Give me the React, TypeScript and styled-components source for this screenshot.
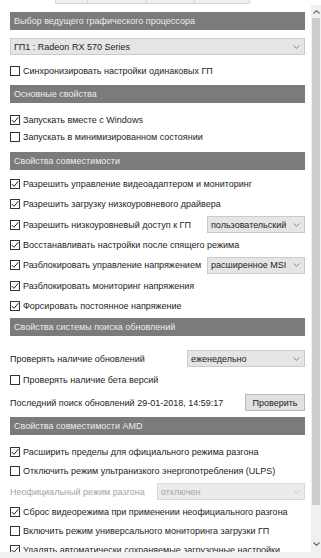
import React from "react";
import styled, { createGlobalStyle } from "styled-components";

const Global = createGlobalStyle`
  html, body { margin: 0; padding: 0; background: #ffffff; }
  body {
    font-family: "Liberation Sans", Arial, sans-serif;
    font-size: 9px;
    color: #1c1c1c;
  }
  * { box-sizing: border-box; }
`;

const Window = styled.div`
  width: 321px;
  height: 558px;
  display: flex;
  flex-direction: column;
  overflow: hidden;
  background: #ffffff;
`;

const TabStrip = styled.div`
  height: 4px;
  display: flex;
  padding-left: 55px;
`;

const Tab = styled.div<{ $w: number; $first?: boolean }>`
  width: ${(p) => p.$w}px;
  height: 4px;
  background: #f0f0f0;
  border-right: 1px solid #d6d6d6;
  border-bottom: 1px solid #d6d6d6;
  border-left: ${(p) => (p.$first ? "1px solid #d6d6d6" : "none")};
`;

const Body = styled.div`
  display: flex;
  height: 548px;
`;

const Content = styled.div`
  flex: 1;
  padding: 8px 6px 0 10px;
  overflow: hidden;
  display: flex;
  flex-direction: column;
`;

const Header = styled.div`
  height: 18px;
  flex: none;
  background: #7b7b7b;
  color: #ececec;
  padding-left: 4px;
  display: flex;
  align-items: center;
`;

const Group = styled.div<{ $pt: number; $pb: number }>`
  flex: none;
  display: flex;
  flex-direction: column;
  padding: ${(p) => p.$pt}px 0 ${(p) => p.$pb}px;
`;

const Row = styled.div<{ $h: number; $mt?: number }>`
  height: ${(p) => p.$h}px;
  margin-top: ${(p) => p.$mt ?? 0}px;
  flex: none;
  display: flex;
  align-items: center;
  justify-content: space-between;
  white-space: nowrap;
`;

const CheckWrap = styled.label`
  display: flex;
  align-items: center;
  gap: 3px;
`;

const Box = styled.span`
  width: 10px;
  height: 10px;
  border: 1px solid #333333;
  background: #ffffff;
  display: flex;
  align-items: center;
  justify-content: center;
  flex: none;
`;

const Label = styled.span<{ $disabled?: boolean }>`
  color: ${(p) => (p.$disabled ? "#a3a3a3" : "#1c1c1c")};
`;

const SelectBox = styled.div<{ $w?: number; $disabled?: boolean }>`
  width: ${(p) => (p.$w ? `${p.$w}px` : "100%")};
  height: 17px;
  flex: none;
  background: ${(p) => (p.$disabled ? "#ebebeb" : "#e5e5e5")};
  border: 1px solid ${(p) => (p.$disabled ? "#d9d9d9" : "#cbcbcb")};
  color: ${(p) => (p.$disabled ? "#a6a6a6" : "#1c1c1c")};
  display: flex;
  align-items: center;
  justify-content: space-between;
  padding: 0 4px 0 3px;
`;

const Button = styled.div`
  width: 60px;
  height: 17px;
  background: #e1e1e1;
  border: 1px solid #b9b9b9;
  display: flex;
  align-items: center;
  justify-content: center;
  flex: none;
`;

const Scroll = styled.div`
  width: 10px;
  margin-top: 1px;
  background: #f0f0f0;
  display: flex;
  flex-direction: column;
  align-items: center;
`;

const ArrowBtn = styled.div<{ $h: number }>`
  height: ${(p) => p.$h}px;
  width: 10px;
  display: flex;
  align-items: center;
  justify-content: center;
  flex: none;
`;

const Thumb = styled.div`
  width: 8px;
  height: 487px;
  background: #cdcdcd;
  flex: none;
`;

const Spacer = styled.div`
  flex: 1;
`;

const BottomStrip = styled.div`
  height: 6px;
  background: #f0f0f0;
  flex: none;
`;

const Chevron = ({ color = "#7a7a7a" }: { color?: string }) => (
  <svg width="7" height="4" viewBox="0 0 7 4">
    <polyline points="0.5,0.5 3.5,3.3 6.5,0.5" fill="none" stroke={color} strokeWidth="0.9" />
  </svg>
);

const ScrollArrow = ({ up }: { up?: boolean }) => (
  <svg width="7" height="4" viewBox="0 0 7 4">
    <polyline
      points={up ? "0.5,3.5 3.5,0.7 6.5,3.5" : "0.5,0.5 3.5,3.3 6.5,0.5"}
      fill="none"
      stroke="#606060"
      strokeWidth="1.1"
    />
  </svg>
);

const Check = ({ checked, text, disabled }: { checked?: boolean; text: string; disabled?: boolean }) => (
  <CheckWrap>
    <Box>
      {checked && (
        <svg width="8" height="8" viewBox="0 0 8 8">
          <polyline points="0.8,4 3,6.3 7.3,1.2" fill="none" stroke="#222" strokeWidth="1" />
        </svg>
      )}
    </Box>
    <Label $disabled={disabled}>{text}</Label>
  </CheckWrap>
);

const Select = ({ text, w, disabled }: { text: string; w?: number; disabled?: boolean }) => (
  <SelectBox $w={w} $disabled={disabled}>
    <span>{text}</span>
    <Chevron color={disabled ? "#c4c4c4" : "#7a7a7a"} />
  </SelectBox>
);

const compat: { t: string; c: boolean; sel?: string }[] = [
  { t: "Разрешить управление видеоадаптером и мониторинг", c: true },
  { t: "Разрешить загрузку низкоуровневого драйвера", c: true },
  { t: "Разрешить низкоуровневый доступ к ГП", c: true, sel: "пользовательский" },
  { t: "Восстанавливать настройки после спящего режима", c: true },
  { t: "Разблокировать управление напряжением", c: true, sel: "расширенное MSI" },
  { t: "Разблокировать мониторинг напряжения", c: true },
  { t: "Форсировать постоянное напряжение", c: true },
];

export default function App() {
  return (
    <>
      <Global />
      <Window>
        <TabStrip>
          <Tab $w={33} $first />
          <Tab $w={59} />
          <Tab $w={48} />
          <Tab $w={55} />
        </TabStrip>
        <Body>
          <Content>
            <Header>Выбор ведущего графического процессора</Header>
            <Group $pt={8} $pb={5}>
              <Select text="ГП1 : Radeon RX 570 Series" />
              <Row $h={18} $mt={7}>
                <Check text="Синхронизировать настройки одинаковых ГП" />
              </Row>
            </Group>

            <Header>Основные свойства</Header>
            <Group $pt={8} $pb={7}>
              <Row $h={17}>
                <Check checked text="Запускать вместе с Windows" />
              </Row>
              <Row $h={17}>
                <Check text="Запускать в минимизированном состоянии" />
              </Row>
            </Group>

            <Header>Свойства совместимости</Header>
            <Group $pt={4} $pb={2}>
              {compat.map((r) => (
                <Row key={r.t} $h={20.3}>
                  <Check checked={r.c} text={r.t} />
                  {r.sel && <Select text={r.sel} w={98} />}
                </Row>
              ))}
            </Group>

            <Header>Свойства системы поиска обновлений</Header>
            <Group $pt={13} $pb={4}>
              <Row $h={19}>
                <Label>Проверять наличие обновлений</Label>
                <Select text="еженедельно" w={118} />
              </Row>
              <Row $h={24}>
                <Check text="Проверять наличие бета версий" />
              </Row>
              <Row $h={21}>
                <Label>Последний поиск обновлений 29-01-2018, 14:59:17</Label>
                <Button>Проверить</Button>
              </Row>
            </Group>

            <Header>Свойства совместимости AMD</Header>
            <Group $pt={7} $pb={0}>
              <Row $h={19.5}>
                <Check checked text="Расширить пределы для официального режима разгона" />
              </Row>
              <Row $h={19.5}>
                <Check text="Отключить режим ультранизкого энергопотребления (ULPS)" />
              </Row>
              <Row $h={21}>
                <Label $disabled>Неофициальный режим разгона</Label>
                <Select text="отключен" w={148} disabled />
              </Row>
              <Row $h={19}>
                <Check checked text="Сброс видеорежима при применении неофициального разгона" />
              </Row>
              <Row $h={19.5}>
                <Check text="Включить режим универсального мониторинга загрузки ГП" />
              </Row>
              <Row $h={19.5}>
                <Check checked text="Удалять автоматически сохраняемые загрузочные настройки" />
              </Row>
            </Group>
          </Content>
          <Scroll>
            <ArrowBtn $h={13}>
              <ScrollArrow up />
            </ArrowBtn>
            <Thumb />
            <Spacer />
            <ArrowBtn $h={16}>
              <ScrollArrow />
            </ArrowBtn>
          </Scroll>
        </Body>
        <BottomStrip />
      </Window>
    </>
  );
}
